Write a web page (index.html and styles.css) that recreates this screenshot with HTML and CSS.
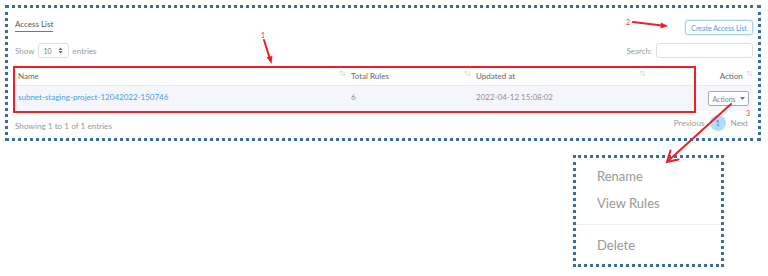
FILE: index.html
```html
<!DOCTYPE html>
<html>
<head>
<meta charset="utf-8">
<link rel="stylesheet" href="styles.css">
</head>
<body>
<div class="panel">
  <div class="head">
    <div class="title">Access List</div>
    <button class="create">Create Access List</button>
  </div>
  <div class="controls">
    <div class="len">Show
      <span class="select">10
        <svg class="updown" width="5" height="7" viewBox="0 0 5 7"><path d="M2.5 0.5 L4.5 3 L0.5 3 Z M2.5 6.5 L4.5 4 L0.5 4 Z" fill="#666"/></svg>
      </span>
      entries</div>
    <div class="search">Search:<span class="input"></span></div>
  </div>
  <div class="table">
    <div class="th"><span>Name</span><span class="sort">↑↓</span></div>
    <div class="th"><span>Total Rules</span><span class="sort">↑↓</span></div>
    <div class="th"><span>Updated at</span><span class="sort">↑↓</span></div>
    <div class="th th-action"><span>Action</span><span class="sort">↑↓</span></div>
    <div class="td"><a class="link">subnet-staging-project-12042022-150746</a></div>
    <div class="td">6</div>
    <div class="td">2022-04-12 15:08:02</div>
    <div class="td td-action"><span class="actions">Actions <svg width="5" height="3" viewBox="0 0 5 3"><path d="M0 0 L5 0 L2.5 3 Z" fill="#777"/></svg></span></div>
  </div>
  <div class="foot">
    <div class="info">Showing 1 to 1 of 1 entries</div>
    <div class="pager"><span>Previous</span><span class="page">1</span><span>Next</span></div>
  </div>
</div>

<div class="menu">
  <div class="item">Rename</div>
  <div class="item">View Rules</div>
  <div class="divider"></div>
  <div class="item">Delete</div>
</div>

<svg class="marks" width="768" height="276" viewBox="0 0 768 276">
  <rect x="14" y="67" width="681" height="45" fill="none" stroke="#ec2027" stroke-width="2"/>
  <g stroke="#ec2027" stroke-width="2" fill="none" stroke-linecap="round">
    <line x1="264" y1="40" x2="270" y2="59"/>
    <line x1="633" y1="22" x2="662" y2="25.5"/>
    <line x1="731" y1="104" x2="668" y2="161"/>
    <polyline points="678.5,159.5 667,162 670.5,150.5"/>
  </g>
  <g fill="#ec2027">
    <path d="M271.5 64 L266.5 57 L272.5 56 Z"/>
    <path d="M668 26 L661 22.5 L660.5 28.5 Z"/>
  </g>
</svg>
<span class="num n1">1</span>
<span class="num n2">2</span>
<span class="num n3">3</span>
</body>
</html>
```

FILE: styles.css
```css
* { box-sizing: border-box; }
body {
  margin: 0;
  background: #fff;
  font-family: Lato, "Open Sans", sans-serif;
  font-size: 8px;
  color: #999;
  position: relative;
  width: 768px;
  height: 276px;
  overflow: hidden;
}
.panel {
  margin: 5px 0 0 5px;
  width: 756px;
  height: 136px;
  border: 3px dotted #3b6d9e;
  padding: 12px 5px 0 7px;
}
.head {
  display: flex;
  justify-content: space-between;
  align-items: flex-start;
  height: 15px;
}
.title {
  margin-top: -1px;
  line-height: 10px;
  padding-bottom: 2px;
  border-bottom: 1px solid #777;
  color: #555;
  font-size: 8px;
}
.create {
  width: 68px;
  height: 15px;
  border: 1px solid #a6d2f5;
  border-radius: 3px;
  background: #fff;
  color: #4a9ce2;
  font-family: inherit;
  font-size: 7px;
  padding: 0;
  box-shadow: 0 0 0 1px #e4f1fc;
}
.controls {
  margin-top: 8px;
  display: flex;
  justify-content: space-between;
  align-items: center;
  height: 15px;
}
.len, .search { display: flex; align-items: center; }
.select {
  display: inline-flex;
  align-items: center;
  justify-content: space-between;
  width: 31px;
  height: 15px;
  margin: 0 4px 0 3px;
  padding: 0 5px;
  border: 1px solid #dedede;
  border-radius: 3px;
  color: #777;
  font-size: 7px;
}
.input {
  display: inline-block;
  width: 97px;
  height: 15px;
  margin-left: 4px;
  border: 1px solid #dedede;
  border-radius: 3px;
}
.table {
  margin-top: 9px;
  display: grid;
  grid-template-columns: 333px 125px 175px 1fr;
  grid-template-rows: 19px 25px;
}
.th {
  display: flex;
  justify-content: space-between;
  align-items: center;
  padding: 0 3px 0 3px;
  border-bottom: 1px solid #e6e9f0;
  color: #666;
  font-size: 8px;
}
.sort {
  align-self: flex-start;
  margin-top: 3px;
  font-size: 5.5px;
  letter-spacing: -1px;
  color: #c8c8c8;
}
.th-action { justify-content: flex-end; gap: 3px; padding-right: 1px; }
.td {
  display: flex;
  align-items: center;
  padding: 0 3px 4px 3px;
  background: #f4f6fb;
  color: #8e8e8e;
  font-size: 8px;
}
.link { color: #45a0e6; }
.td-action { justify-content: flex-end; padding: 0 4px 0 0; }
.actions {
  display: inline-flex;
  align-items: center;
  gap: 4px;
  height: 15px;
  width: 41px;
  justify-content: center;
  border: 1px solid #aaa;
  border-radius: 2px;
  background: #fff;
  color: #888;
  font-size: 7px;
}
.foot {
  margin-top: 4px;
  display: flex;
  justify-content: space-between;
  align-items: center;
  height: 16px;
}
.info { margin-top: 5px; font-size: 8.2px; }
.pager { display: flex; align-items: center; gap: 5px; padding-right: 5px; font-size: 8.2px; }
.page {
  width: 16px;
  height: 16px;
  border-radius: 50%;
  background: #b4dbf8;
  color: #3a8fd6;
  display: flex;
  align-items: center;
  justify-content: center;
}
.menu {
  margin: 14px 0 0 573px;
  width: 151px;
  height: 112px;
  border: 3px dotted #3b6d9e;
  padding-top: 5px;
}
.item {
  height: 27px;
  line-height: 27px;
  padding-left: 21px;
  font-size: 13px;
  color: #999;
}
.divider {
  height: 1px;
  background: #eef0f6;
  margin: 7px 0 7px 0;
}
.marks { position: absolute; left: 0; top: 0; pointer-events: none; }
.num {
  position: absolute;
  color: #f0363a;
  font-size: 7px;
  line-height: 8px;
}
.n1 { left: 261px; top: 31px; }
.n2 { left: 626px; top: 18px; }
.n3 { left: 746px; top: 109px; }
```
